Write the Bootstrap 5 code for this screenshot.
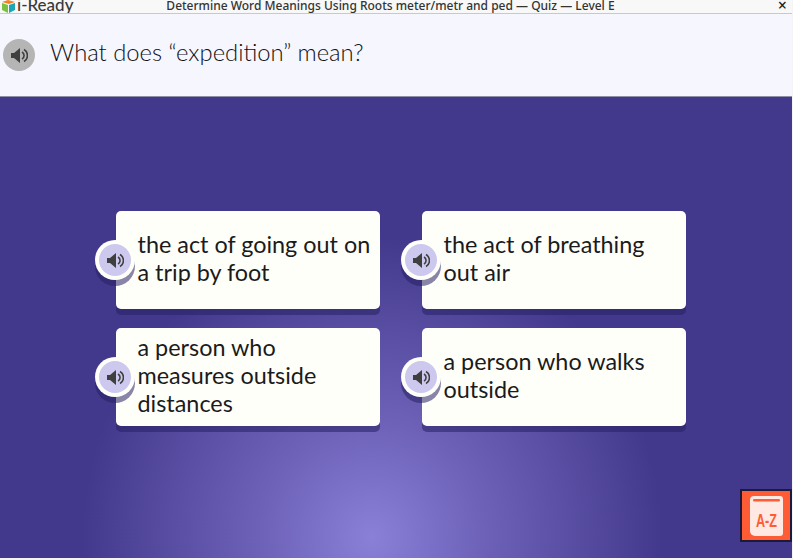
<!DOCTYPE html>
<html lang="en">
<head>
  <meta charset="UTF-8">
  <meta name="viewport" content="width=device-width, initial-scale=1.0">
  <title>Quiz</title>
  <link href="https://cdn.jsdelivr.net/npm/bootstrap@5.3.3/dist/css/bootstrap.min.css" rel="stylesheet">
  <style>
    html, body {
      height: 560px;
      overflow: hidden;
    }
    body {
      background-color: #f4f4f4;
      font-family: "Lato", "Open Sans", sans-serif;
    }
    .app-frame {
      width: 792px;
      height: 558px;
      position: relative;
    }
    .title-bar {
      height: 14px;
      background-color: #f8f8f8;
      border-bottom: 1px solid #c9c9c9;
      font-family: "Noto Sans", sans-serif;
      font-size: 12px;
      font-weight: 500;
      line-height: 11px;
      color: #333;
      overflow: hidden;
    }
    .logo-box {
      width: 150px;
      height: 13px;
      padding-left: 2px;
      gap: 2px;
      align-items: flex-end;
    }
    .logo-text {
      font-family: "Lato", sans-serif;
      font-size: 17px;
      font-weight: 500;
      line-height: 17px;
      color: #3a3a3a;
    }
    .bar-title {
      width: 497px;
      text-align: center;
      margin-left: -8px;
      white-space: nowrap;
    }
    .close-x {
      margin-left: auto;
      margin-right: 5px;
      font-size: 16px;
      line-height: 11px;
      color: #222;
    }
    .question-bar {
      height: 83px;
      background-color: #f6f6ff;
      border-bottom: 1px solid #8f8fa8;
      padding-left: 3px;
      gap: 15px;
    }
    .question-text {
      font-size: 23.8px;
      font-weight: 300;
      color: #111;
      margin: 0 0 5px;
    }
    .sound-grey {
      width: 32px;
      height: 32px;
      background-color: #b5b5b5;
    }
    .stage {
      flex: 1;
      padding: 114px 0 0 10px;
      background:
        radial-gradient(ellipse 290px 300px at 372px 440px, #8a80d8 0%, #6d62b8 38%, rgba(67,57,140,0) 100%),
        #43398c;
    }
    .answer-grid {
      display: grid;
      grid-template-columns: 264px 264px;
      grid-auto-rows: 98px;
      gap: 19px 42px;
    }
    .answer-box {
      background-color: #fffffa;
      border-radius: 5px;
      box-shadow: 0 6px 0 rgba(40, 32, 100, .55);
      padding: 0 7px 4px 21.5px;
      font-size: 23.4px;
      line-height: 28px;
      color: #1b1b1b;
      position: relative;
    }
    .sound-ring {
      position: absolute;
      left: -21px;
      top: 29px;
      width: 40px;
      height: 40px;
      background-color: #fffffa;
      box-shadow: 0 6px 0 rgba(40, 32, 100, .55);
    }
    .sound-inner {
      width: 32px;
      height: 32px;
      background-color: #cdc8ee;
    }
    .az-btn {
      position: absolute;
      right: 0;
      bottom: 16px;
      width: 52px;
      height: 53px;
      background-color: #ff5c35;
      border: 2px solid #1c1a3a;
    }
  </style>
</head>
<body>
  <div class="app-frame d-flex flex-column">
    <div class="title-bar d-flex">
      <div class="logo-box d-flex">
        <svg width="13" height="13" viewBox="0 0 13 13">
          <path d="M0 3l6 2v8l-6-3z" fill="#7cc242"/>
          <path d="M7 5l6-2v7l-6 3z" fill="#1ba7b5"/>
          <path d="M0 2l6-2 7 2-6 2z" fill="#f58220"/>
        </svg>
        <span class="logo-text">i-Ready</span>
      </div>
      <div class="bar-title">Determine Word Meanings Using Roots meter/metr and ped — Quiz — Level E</div>
      <span class="close-x">×</span>
    </div>

    <div class="question-bar d-flex align-items-center">
      <div class="sound-grey rounded-circle d-flex align-items-center justify-content-center">
        <svg width="17" height="15" viewBox="0 0 17 15">
          <path d="M0 5h3l6-5v15l-6-5H0z" fill="#3f3f3f"/>
          <path d="M11 4a4 4 0 0 1 0 7M13 1.500a7 7 0 0 1 0 12" fill="none" stroke="#3f3f3f" stroke-width="1.600"/>
        </svg>
      </div>
      <p class="question-text">What does “expedition” mean?</p>
    </div>

    <div class="stage d-flex justify-content-center">
      <div class="answer-grid">
        <div class="answer-box d-flex align-items-center">
          <div class="sound-ring rounded-circle d-flex align-items-center justify-content-center">
            <div class="sound-inner rounded-circle d-flex align-items-center justify-content-center">
              <svg width="17" height="15" viewBox="0 0 17 15"><path d="M0 5h3l6-5v15l-6-5H0z" fill="#3f3f3f"/><path d="M11 4a4 4 0 0 1 0 7M13 1.500a7 7 0 0 1 0 12" fill="none" stroke="#3f3f3f" stroke-width="1.600"/></svg>
            </div>
          </div>
          <span>the act of going out on a trip by foot</span>
        </div>
        <div class="answer-box d-flex align-items-center">
          <div class="sound-ring rounded-circle d-flex align-items-center justify-content-center">
            <div class="sound-inner rounded-circle d-flex align-items-center justify-content-center">
              <svg width="17" height="15" viewBox="0 0 17 15"><path d="M0 5h3l6-5v15l-6-5H0z" fill="#3f3f3f"/><path d="M11 4a4 4 0 0 1 0 7M13 1.500a7 7 0 0 1 0 12" fill="none" stroke="#3f3f3f" stroke-width="1.600"/></svg>
            </div>
          </div>
          <span>the act of breathing<br>out air</span>
        </div>
        <div class="answer-box d-flex align-items-center">
          <div class="sound-ring rounded-circle d-flex align-items-center justify-content-center">
            <div class="sound-inner rounded-circle d-flex align-items-center justify-content-center">
              <svg width="17" height="15" viewBox="0 0 17 15"><path d="M0 5h3l6-5v15l-6-5H0z" fill="#3f3f3f"/><path d="M11 4a4 4 0 0 1 0 7M13 1.500a7 7 0 0 1 0 12" fill="none" stroke="#3f3f3f" stroke-width="1.600"/></svg>
            </div>
          </div>
          <span>a person who<br>measures outside<br>distances</span>
        </div>
        <div class="answer-box d-flex align-items-center">
          <div class="sound-ring rounded-circle d-flex align-items-center justify-content-center">
            <div class="sound-inner rounded-circle d-flex align-items-center justify-content-center">
              <svg width="17" height="15" viewBox="0 0 17 15"><path d="M0 5h3l6-5v15l-6-5H0z" fill="#3f3f3f"/><path d="M11 4a4 4 0 0 1 0 7M13 1.500a7 7 0 0 1 0 12" fill="none" stroke="#3f3f3f" stroke-width="1.600"/></svg>
            </div>
          </div>
          <span>a person who walks<br>outside</span>
        </div>
      </div>
    </div>

    <div class="az-btn d-flex align-items-center justify-content-center">
      <svg width="33" height="40" viewBox="0 0 33 40">
        <path d="M4 0h26a3 3 0 0 1 3 3v34a3 3 0 0 1-3 3H5a5 5 0 0 1-5-5V4a4 4 0 0 1 4-4z" fill="#ffe9e2"/>
        <rect x="3" y="3" width="27" height="2.500" rx="1.250" fill="#ff5c35"/>
        <text x="16.500" y="31" text-anchor="middle" font-family="Liberation Sans, sans-serif" font-size="18" font-weight="700" fill="#ff5c35" textLength="21" lengthAdjust="spacingAndGlyphs">A-Z</text>
      </svg>
    </div>
  </div>
  <script src="https://cdn.jsdelivr.net/npm/bootstrap@5.3.3/dist/js/bootstrap.bundle.min.js"></script>
</body>
</html>
